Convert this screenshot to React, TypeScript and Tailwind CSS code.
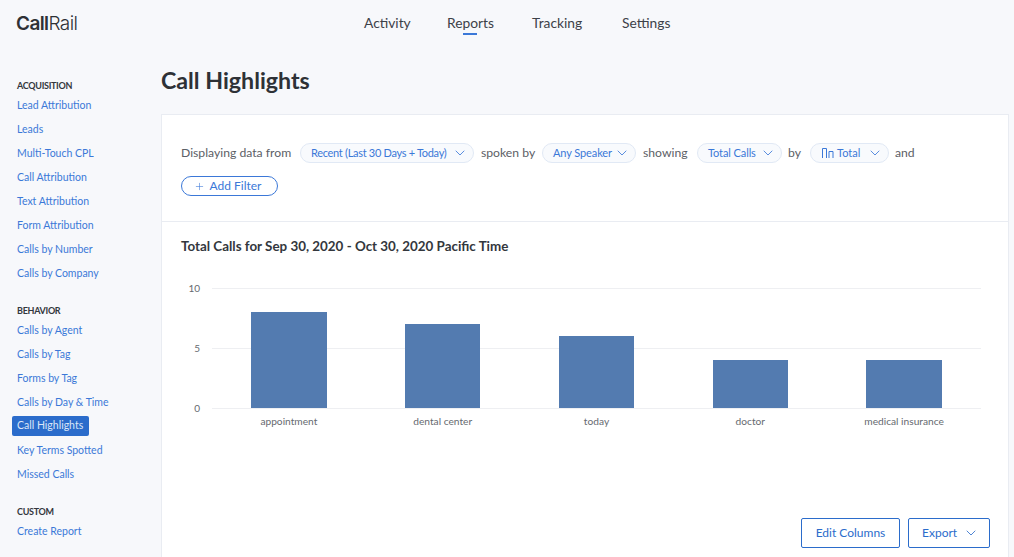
import { ChevronDown, Plus } from "lucide-react";

const sections = [
  {
    title: "ACQUISITION",
    links: ["Lead Attribution", "Leads", "Multi-Touch CPL", "Call Attribution", "Text Attribution", "Form Attribution", "Calls by Number", "Calls by Company"],
  },
  {
    title: "BEHAVIOR",
    links: ["Calls by Agent", "Calls by Tag", "Forms by Tag", "Calls by Day & Time", "Call Highlights", "Key Terms Spotted", "Missed Calls"],
  },
  {
    title: "CUSTOM",
    links: ["Create Report"],
  },
];

const bars = [
  { label: "appointment", value: 8 },
  { label: "dental center", value: 7 },
  { label: "today", value: 6 },
  { label: "doctor", value: 4 },
  { label: "medical insurance", value: 4 },
];

const Pill = ({ label, icon, className }: { label: string; icon?: boolean; className: string }) => (
  <span className={`inline-flex h-[20px] items-center justify-between rounded-full border border-[#e1e9f5] bg-[#f8fafd] pl-[10px] pr-[5px] text-[11px] text-[#3b78d8] ${className}`}>
    <span className="flex items-center gap-[3px] whitespace-nowrap">
      {icon && (
        <svg width="13" height="12" viewBox="0 0 13 12" fill="none" stroke="#3b78d8" strokeWidth="1">
          <path d="M1.5 11V1.5H5.5V11M8 11V4.5H12V11" />
        </svg>
      )}
      {label}
    </span>
    <ChevronDown size={16} strokeWidth={1.25} />
  </span>
);

const Chart = () => (
  <div className="relative ml-[50px] mr-[27px] mt-[33px] h-[121px] border-b border-[#eeeff2]">
    <div className="absolute left-[-30px] top-[-7px] w-[18px] text-right text-[10px] leading-[14px] text-[#666a70]">10</div>
    <div className="absolute left-[-30px] top-[53px] w-[18px] text-right text-[10px] leading-[14px] text-[#666a70]">5</div>
    <div className="absolute left-[-30px] top-[113px] w-[18px] text-right text-[10px] leading-[14px] text-[#666a70]">0</div>
    <div className="absolute inset-x-0 top-0 border-t border-[#eeeff2]" />
    <div className="absolute inset-x-0 top-[60px] border-t border-[#eeeff2]" />
    <div className="relative flex h-full items-end justify-between">
      {bars.map((b) => (
        <div key={b.label} className="relative flex h-full w-[154.2px] items-end justify-center">
          <div className="w-[75.5px] bg-[#537bb0]" style={{ height: b.value * 12 }} />
          <span className="absolute top-[126px] whitespace-nowrap text-[10.2px] leading-[14px] text-[#666a70]">{b.label}</span>
        </div>
      ))}
    </div>
  </div>
);

export default function App() {
  return (
    <div className="flex h-[557px] w-[1014px] flex-col overflow-hidden bg-[#f7f8fb] font-['Lato','Noto_Sans',sans-serif] text-[#33373d]">
      <header className="flex h-[47px] shrink-0 items-center pb-[1px]">
        <div className="ml-[16px] w-[348px] font-['Inter',sans-serif] text-[19px] leading-none tracking-[-0.6px] text-[#2e3136]">
          <span className="font-semibold">Call</span>
          <span className="font-light">Rail</span>
        </div>
        <nav className="flex text-[13.8px] text-[#3d4148]">
          <span className="w-[83px]">Activity</span>
          <span className="w-[85px]">
            <span className="relative">
              Reports
              <span className="absolute bottom-[-4px] left-[16px] h-[2px] w-[14px] bg-[#3b78d8]" />
            </span>
          </span>
          <span className="w-[90px]">Tracking</span>
          <span>Settings</span>
        </nav>
      </header>

      <div className="flex min-h-0 flex-1">
        <aside className="w-[161px] shrink-0 pl-[12px] pt-[32px]">
          {sections.map((s) => (
            <div key={s.title} className="mb-[19px]">
              <div className="pl-[5px] text-[9px] font-bold leading-[14px] tracking-[-0.3px] text-[#33373d]">{s.title}</div>
              {s.links.map((l) => (
                <div key={l} className="flex h-[24px] items-center">
                  <a className={l === "Call Highlights"
                    ? "flex h-[20px] w-[77px] items-center rounded-[2px] bg-[#2b6ccb] px-[5px] text-[10.5px] text-[#dbe7f8]"
                    : "px-[5px] text-[10.5px] leading-[16px] text-[#3b78d8]"}>
                    {l}
                  </a>
                </div>
              ))}
            </div>
          ))}
        </aside>

        <main className="min-w-0 flex-1 pr-[5px]">
          <h1 className="pb-[17px] pt-[17px] text-[23.2px] font-bold leading-[33px] text-[#2e3136]">Call Highlights</h1>
          <div className="h-[460px] border border-[#e9ecf2] bg-white">
            <div className="h-[107px] border-b border-[#e9ecf2] pl-[19px] pt-[28px]">
              <div className="flex h-[20px] items-center text-[12.2px] text-[#5c6066]">
                <span className="w-[119px]">Displaying data from</span>
                <Pill label="Recent (Last 30 Days + Today)" className="w-[174px] tracking-[-0.3px]" />
                <span className="ml-[7px] w-[61px]">spoken by</span>
                <Pill label="Any Speaker" className="w-[94px] tracking-[-0.1px]" />
                <span className="ml-[7px] w-[54px]">showing</span>
                <Pill label="Total Calls" className="w-[85px] tracking-[-0.1px]" />
                <span className="ml-[6px] w-[22px]">by</span>
                <Pill label="Total" icon className="w-[79px]" />
                <span className="ml-[6px]">and</span>
              </div>
              <button className="mt-[13px] flex h-[20px] w-[97px] items-center justify-center gap-[5px] rounded-full border border-[#3b78d8] pr-[4px] text-[12px] text-[#3b78d8]">
                <Plus size={11} strokeWidth={1.25} />
                Add Filter
              </button>
            </div>
            <h2 className="pl-[19px] pt-[15px] text-[13.4px] font-bold leading-[18px] text-[#33373d]">
              Total Calls for Sep 30, 2020 - Oct 30, 2020 Pacific Time
            </h2>
            <Chart />
            <div className="mt-[109px] flex justify-end gap-[8px] pr-[18px]">
              <button className="h-[30px] w-[99px] rounded-[2px] border border-[#2b6ccb] text-[12px] text-[#2b6ccb]">Edit Columns</button>
              <button className="flex h-[30px] w-[82px] items-center gap-[6px] rounded-[2px] border border-[#2b6ccb] pl-[13px] text-[12px] text-[#2b6ccb]">
                Export
                <ChevronDown size={16} strokeWidth={1.25} />
              </button>
            </div>
          </div>
        </main>
      </div>
    </div>
  );
}
